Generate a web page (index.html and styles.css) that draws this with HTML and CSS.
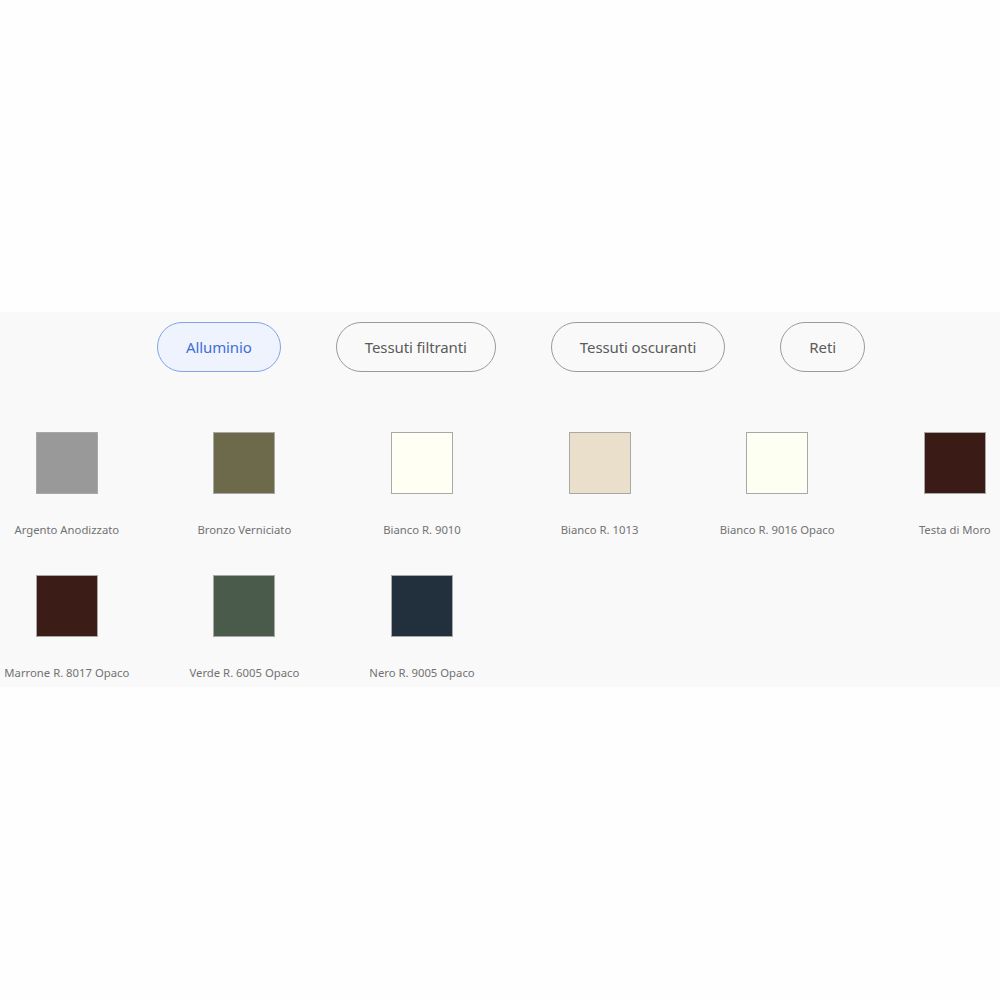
FILE: index.html
```html
<!DOCTYPE html>
<html lang="it">
<head>
<meta charset="utf-8">
<link rel="stylesheet" href="styles.css">
</head>
<body>
<div class="top-space"></div>
<section class="band">
  <nav class="tabs">
    <button class="tab active">Alluminio</button>
    <button class="tab">Tessuti filtranti</button>
    <button class="tab">Tessuti oscuranti</button>
    <button class="tab">Reti</button>
  </nav>
  <div class="grid">
    <div class="item"><div class="sw" style="background:#999999"></div><span class="lbl">Argento Anodizzato</span></div>
    <div class="item"><div class="sw" style="background:#6d6a4c"></div><span class="lbl">Bronzo Verniciato</span></div>
    <div class="item"><div class="sw" style="background:#fffff3"></div><span class="lbl">Bianco R. 9010</span></div>
    <div class="item"><div class="sw" style="background:#eadfcb"></div><span class="lbl">Bianco R. 1013</span></div>
    <div class="item"><div class="sw" style="background:#fdfff2"></div><span class="lbl">Bianco R. 9016 Opaco</span></div>
    <div class="item"><div class="sw" style="background:#3b1b16"></div><span class="lbl">Testa di Moro</span></div>
    <div class="item"><div class="sw" style="background:#3b1c16"></div><span class="lbl">Marrone R. 8017 Opaco</span></div>
    <div class="item"><div class="sw" style="background:#4a5a4b"></div><span class="lbl">Verde R. 6005 Opaco</span></div>
    <div class="item"><div class="sw" style="background:#22303d"></div><span class="lbl">Nero R. 9005 Opaco</span></div>
  </div>
</section>
</body>
</html>
```

FILE: styles.css
```css
html, body {
  margin: 0;
  padding: 0;
  background: #fefefe;
  font-family: "Noto Sans", "Open Sans", sans-serif;
}
.top-space {
  height: 312px;
}
.band {
  background: #f9f9f9;
  height: 375px;
  box-sizing: border-box;
  padding-top: 10px;
  overflow: hidden;
}
.tabs {
  display: flex;
  justify-content: center;
  gap: 55px;
  padding-left: 22px;
}
.tab {
  height: 50px;
  padding: 0 28px;
  border-radius: 25px;
  border: 1px solid #9a9a9a;
  background: #f9f9f9;
  color: #5b5b5b;
  font-family: "Noto Sans", sans-serif;
  font-size: 15px;
  letter-spacing: -0.1px;
  cursor: pointer;
}
.tab.active {
  border-color: #7ea4ea;
  background: #eef3fd;
  color: #3f6fd6;
}
.grid {
  display: grid;
  grid-template-columns: repeat(6, 177.6px);
  row-gap: 38px;
  margin-left: -22px;
  margin-top: 60px;
}
.item {
  display: flex;
  flex-direction: column;
  align-items: center;
}
.sw {
  width: 60px;
  height: 60px;
  border: 1px solid #a8a8a8;
}
.lbl {
  margin-top: 29px;
  font-size: 11.3px;
  line-height: 14px;
  color: #727272;
  white-space: nowrap;
}
```
